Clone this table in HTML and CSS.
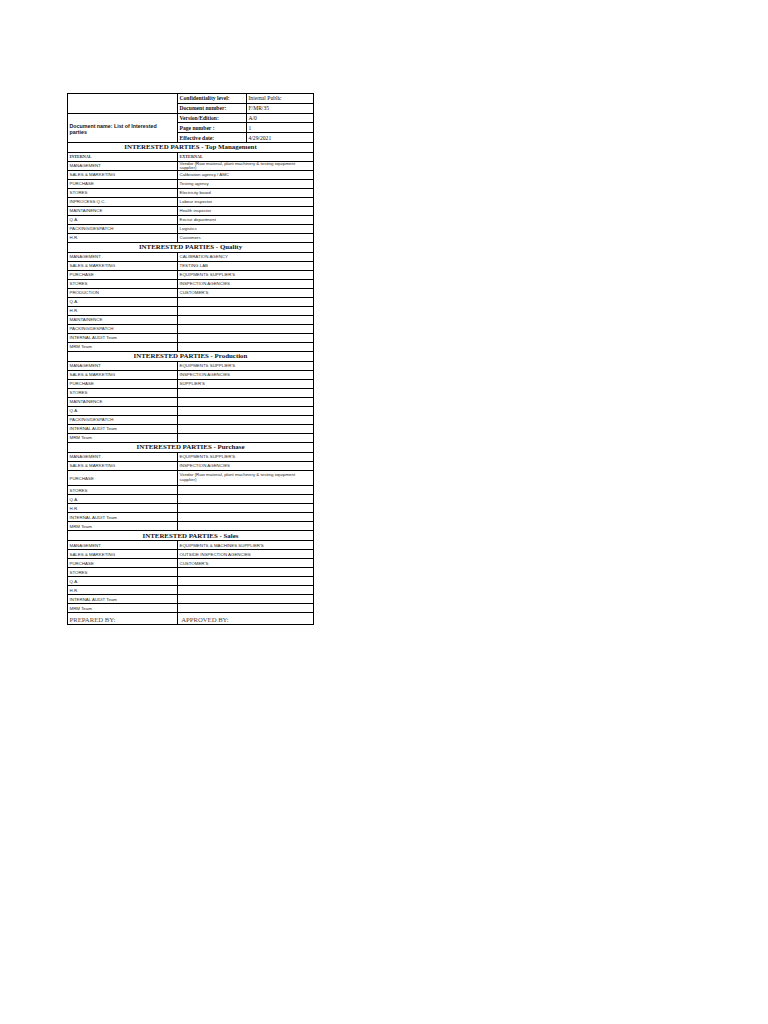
FILE: index.html
```html
<!DOCTYPE html>
<html>
<head>
<meta charset="utf-8">
<link rel="stylesheet" href="styles.css">
</head>
<body>
<div class="page">
<table class="sheet">
<colgroup><col class="c1"><col class="c2"><col class="c3"></colgroup>
<tr class="hr"><td rowspan="2"></td><td class="lbl">Confidentiality level:</td><td class="val">Internal Public</td></tr>
<tr class="hr"><td class="lbl">Document number:</td><td class="val">F/MR/35</td></tr>
<tr class="hr"><td rowspan="3" class="docname"><div class="dn">Document name: List of Interested parties</div></td><td class="lbl">Version/Edition:</td><td class="val">A/0</td></tr>
<tr class="hr"><td class="lbl">Page number :</td><td class="val">1</td></tr>
<tr class="hr"><td class="lbl">Effective date:</td><td class="val">4/29/2021</td></tr>

<tr class="title"><td colspan="3">INTERESTED PARTIES - Top Management</td></tr>
<tr class="row"><td class="sub">INTERNAL</td><td colspan="2" class="sub">EXTERNAL</td></tr>
<tr class="row"><td>MANAGEMENT</td><td colspan="2" class="r top"><div class="ov">Vendor (Raw material, plant machinery &amp; testing equipment supplier)</div></td></tr>
<tr class="row"><td>SALES &amp; MARKETING</td><td colspan="2" class="r">Calibration agency / AMC</td></tr>
<tr class="row"><td>PURCHASE</td><td colspan="2" class="r">Testing agency</td></tr>
<tr class="row"><td>STORES</td><td colspan="2" class="r">Electricity board</td></tr>
<tr class="row"><td>INPROCESS Q.C.</td><td colspan="2" class="r">Labour inspector</td></tr>
<tr class="row"><td>MAINTAINENCE</td><td colspan="2" class="r">Health inspector</td></tr>
<tr class="row"><td>Q.A.</td><td colspan="2" class="r">Excise department</td></tr>
<tr class="row"><td>PACKING/DESPATCH</td><td colspan="2" class="r">Logistics</td></tr>
<tr class="row"><td>H.R.</td><td colspan="2" class="r">Customers</td></tr>

<tr class="title"><td colspan="3">INTERESTED PARTIES - Quality</td></tr>
<tr class="row"><td>MANAGEMENT</td><td colspan="2">CALIBRATION AGENCY</td></tr>
<tr class="row"><td>SALES &amp; MARKETING</td><td colspan="2">TESTING LAB</td></tr>
<tr class="row"><td>PURCHASE</td><td colspan="2">EQUIPMENTS SUPPLIER'S</td></tr>
<tr class="row"><td>STORES</td><td colspan="2">INSPECTION AGENCIES</td></tr>
<tr class="row"><td>PRODUCTION</td><td colspan="2">CUSTOMER'S</td></tr>
<tr class="row"><td>Q.A.</td><td colspan="2"></td></tr>
<tr class="row"><td>H.R.</td><td colspan="2"></td></tr>
<tr class="row"><td>MAINTAINENCE</td><td colspan="2"></td></tr>
<tr class="row"><td>PACKING/DESPATCH</td><td colspan="2"></td></tr>
<tr class="row"><td>INTERNAL AUDIT Team</td><td colspan="2"></td></tr>
<tr class="row"><td>MRM Team</td><td colspan="2"></td></tr>

<tr class="title"><td colspan="3">INTERESTED PARTIES - Production</td></tr>
<tr class="row"><td>MANAGEMENT</td><td colspan="2">EQUIPMENTS SUPPLIER'S</td></tr>
<tr class="row"><td>SALES &amp; MARKETING</td><td colspan="2">INSPECTION AGENCIES</td></tr>
<tr class="row"><td>PURCHASE</td><td colspan="2">SUPPLIER'S</td></tr>
<tr class="row"><td>STORES</td><td colspan="2"></td></tr>
<tr class="row"><td>MAINTAINENCE</td><td colspan="2"></td></tr>
<tr class="row"><td>Q.A.</td><td colspan="2"></td></tr>
<tr class="row"><td>PACKING/DESPATCH</td><td colspan="2"></td></tr>
<tr class="row"><td>INTERNAL AUDIT Team</td><td colspan="2"></td></tr>
<tr class="row"><td>MRM Team</td><td colspan="2"></td></tr>

<tr class="title"><td colspan="3">INTERESTED PARTIES - Purchase</td></tr>
<tr class="row"><td>MANAGEMENT</td><td colspan="2">EQUIPMENTS SUPPLIER'S</td></tr>
<tr class="row"><td>SALES &amp; MARKETING</td><td colspan="2">INSPECTION AGENCIES</td></tr>
<tr class="row tall"><td>PURCHASE</td><td colspan="2" class="r"><div class="wrap">Vendor (Raw material, plant machinery &amp; testing equipment supplier)</div></td></tr>
<tr class="row"><td>STORES</td><td colspan="2"></td></tr>
<tr class="row"><td>Q.A.</td><td colspan="2"></td></tr>
<tr class="row"><td>H.R.</td><td colspan="2"></td></tr>
<tr class="row"><td>INTERNAL AUDIT Team</td><td colspan="2"></td></tr>
<tr class="row"><td>MRM Team</td><td colspan="2"></td></tr>

<tr class="title"><td colspan="3">INTERESTED PARTIES - Sales</td></tr>
<tr class="row"><td>MANAGEMENT</td><td colspan="2">EQUIPMENTS &amp; MACHINES SUPPLIER'S</td></tr>
<tr class="row"><td>SALES &amp; MARKETING</td><td colspan="2">OUTSIDE INSPECTION AGENCIES</td></tr>
<tr class="row"><td>PURCHASE</td><td colspan="2">CUSTOMER'S</td></tr>
<tr class="row"><td>STORES</td><td colspan="2"></td></tr>
<tr class="row"><td>Q.A.</td><td colspan="2"></td></tr>
<tr class="row"><td>H.R.</td><td colspan="2"></td></tr>
<tr class="row"><td>INTERNAL AUDIT Team</td><td colspan="2"></td></tr>
<tr class="row"><td>MRM Team</td><td colspan="2"></td></tr>
<tr class="sign"><td>PREPARED BY:</td><td colspan="2">&nbsp;APPROVED BY:</td></tr>
</table>
</div>
</body>
</html>
```

FILE: styles.css
```css
html, body {
  margin: 0;
  padding: 0;
  background: #ffffff;
}

.page {
  padding: 93px 0 0 67px;
}

.sheet {
  border-collapse: collapse;
  table-layout: fixed;
  width: 246px;
  font-family: "Liberation Sans", Arial, sans-serif;
  color: #2a2a2a;
}

.c1 { width: 110px; }
.c2 { width: 69px; }
.c3 { width: 67px; }

.sheet td {
  border: 1px solid #000;
  padding: 0 0 0 1.5px;
  font-size: 4.4px;
  line-height: 5px;
  vertical-align: middle;
  white-space: nowrap;
  overflow: hidden;
}

.hr td {
  height: 8.8px;
  font-family: "Liberation Serif", "Times New Roman", serif;
  font-size: 5.6px;
  line-height: 6px;
  color: #111;
}

.hr td.lbl {
  font-weight: bold;
}

.hr td.docname {
  font-family: "Liberation Sans", Arial, sans-serif;
  font-weight: bold;
  font-size: 5.3px;
  line-height: 6.2px;
  white-space: normal;
  padding-top: 3px;
}

.dn {
  width: 96px;
}

.title td {
  height: 9px;
  text-align: center;
  font-family: "Liberation Serif", "Times New Roman", serif;
  font-weight: bold;
  font-size: 6.9px;
  line-height: 8px;
  color: #111;
  padding: 0;
}

.row td {
  height: 8px;
}

.row td.sub {
  font-family: "Liberation Serif", "Times New Roman", serif;
  font-weight: bold;
  font-size: 4.2px;
}

.row td.top {
  vertical-align: top;
  overflow: visible;
}

.ov {
  white-space: normal;
  width: 125px;
  height: 8px;
  line-height: 4.4px;
}

.row.tall td {
  height: 14.5px;
}

.wrap {
  white-space: normal;
  width: 125px;
  line-height: 4.8px;
}

.sign td {
  height: 10.5px;
  font-family: "Liberation Serif", "Times New Roman", serif;
  font-size: 6.7px;
  line-height: 8px;
  color: #4a4a4a;
  vertical-align: bottom;
}
```
